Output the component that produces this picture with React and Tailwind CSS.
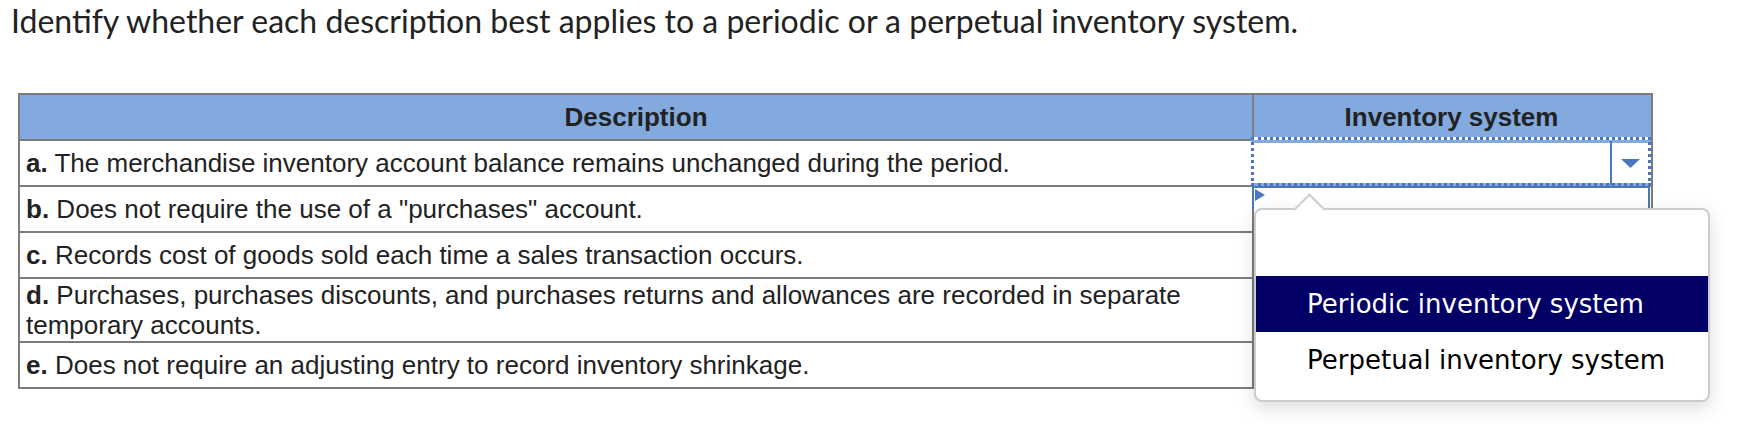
import React from 'react';

const rows = [
  { key: 'a', text: 'The merchandise inventory account balance remains unchanged during the period.', h: 'h-[46px]' },
  { key: 'b', text: 'Does not require the use of a "purchases" account.', h: 'h-[46px]' },
  { key: 'c', text: 'Records cost of goods sold each time a sales transaction occurs.', h: 'h-[46px]' },
  { key: 'd', text: 'Purchases, purchases discounts, and purchases returns and allowances are recorded in separate temporary accounts.', h: 'h-[64px]' },
  { key: 'e', text: 'Does not require an adjusting entry to record inventory shrinkage.', h: 'h-[46px]' },
];

// select fermée avec le focus (ligne a)
const FocusedSelect = () => (
  <>
    <div className="absolute -top-[4px] -left-[3px] -right-[2px] -bottom-[1px] border-[3px] border-dotted border-[#4a76c0] bg-[linear-gradient(#82aadf_3px,#ffffff_3px)]" />
    <div className="relative z-10 flex h-full justify-end">
      <div className="w-[39px] h-full border-l-2 border-[#4a76c0] flex items-center justify-center">
        <svg width="19" height="9" viewBox="0 0 19 9">
          <path d="M0 0 L19 0 L9.5 9 Z" fill="#4a76c0" />
        </svg>
      </div>
    </div>
  </>
);

// select ouverte (ligne b) avec sa liste
const OpenSelect = () => (
  <>
    <div className="absolute -top-[1px] -left-[2px] -right-[1px] h-[24px] border-2 border-b-0 border-[#4a76c0]">
      <svg className="absolute left-[1px] top-[1px]" width="10" height="12" viewBox="0 0 10 12">
        <path d="M0 0 L10 6 L0 12 Z" fill="#4a76c0" />
      </svg>
    </div>
    <div className="absolute left-0 top-[21px] z-20 w-[456px] bg-white border-2 border-[#cccccc] rounded-[8px] shadow-[0_6px_18px_rgba(0,0,0,0.14)] pt-[10px] pb-[12px] font-['DejaVu_Sans',sans-serif] text-[26px]">
      <div className="absolute left-[42px] -top-[12px] w-[23px] h-[23px] rotate-45 bg-white border-t-2 border-l-2 border-[#cccccc]" />
      <div className="h-[56px]" />
      <div className="h-[56px] bg-[#020066] text-white flex items-center pl-[51px]">Periodic inventory system</div>
      <div className="h-[56px] text-black flex items-center pl-[51px]">Perpetual inventory system</div>
    </div>
  </>
);

export default function App() {
  return (
    <div className="w-[1756px] h-[428px] bg-white overflow-hidden text-[#222]">
      <p className="font-['Lato',sans-serif] text-[32px] leading-[38px] pl-[11px] pt-[2px]">
        Identify whether each description best applies to a periodic or a perpetual inventory system.
      </p>

      <div className="ml-[18px] mt-[53px] w-[1635px] border-2 border-[#7c7c7c] font-['Liberation_Sans',Arial,sans-serif] text-[26px] leading-[30px]">
        <div className="flex h-[44px] bg-[#82aadf] font-bold">
          <div className="w-[1234px] border-r-2 border-[#7c7c7c] flex items-center justify-center">Description</div>
          <div className="w-[395px] flex items-center justify-center">Inventory system</div>
        </div>
        {rows.map((r) => (
          <div key={r.key} className={`flex border-t-2 border-[#7c7c7c] ${r.h}`}>
            <div className="w-[1234px] border-r-2 border-[#7c7c7c] flex items-center pl-[6px] pr-[4px]">
              <p>
                <b>{r.key}.</b> {r.text}
              </p>
            </div>
            <div className="relative w-[395px]">
              {r.key === 'a' && <FocusedSelect />}
              {r.key === 'b' && <OpenSelect />}
            </div>
          </div>
        ))}
      </div>
    </div>
  );
}
